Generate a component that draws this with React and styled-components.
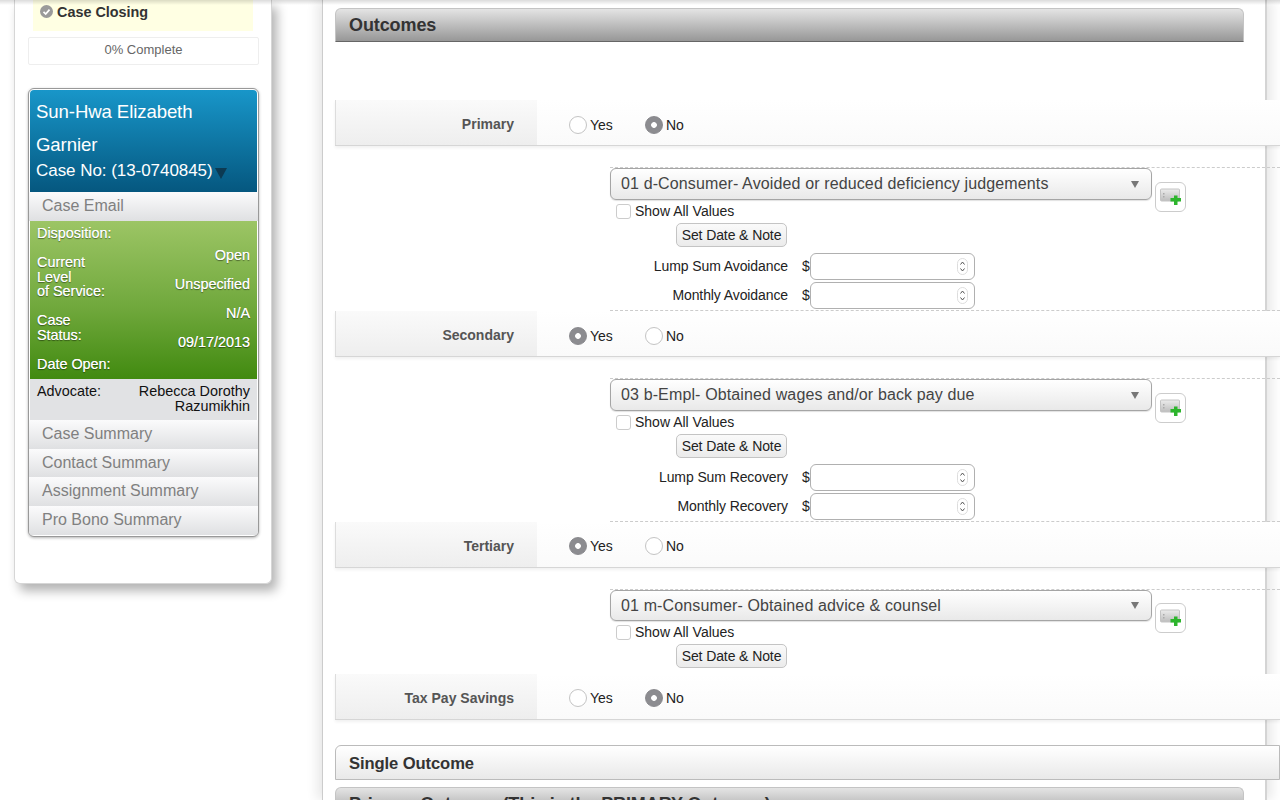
import React from 'react'
import styled, { createGlobalStyle } from 'styled-components'

const Global = createGlobalStyle`
  html, body { margin: 0; padding: 0; background: #fff; overflow: hidden; }
  body { font-family: "Liberation Sans", Arial, sans-serif; }
`

const Page = styled.div`
  position: relative;
  display: flex;
  width: 1280px;
  height: 800px;
  overflow: hidden;
  background: #fff;
  &::after {
    content: '';
    position: absolute;
    left: 0;
    right: 0;
    top: 0;
    height: 5px;
    background: linear-gradient(rgba(0,0,0,.14), rgba(0,0,0,0));
  }
`

const SidePanel = styled.aside`
  flex: none;
  box-sizing: border-box;
  width: 258px;
  height: 584px;
  margin-left: 14px;
  padding: 0 13px 0 13px;
  background: #fff;
  border: 1px solid #d6d6d6;
  border-top: 0;
  border-radius: 0 0 6px 6px;
  box-shadow: 5px 7px 11px rgba(0,0,0,.3);
`

const ClosingBox = styled.div`
  display: flex;
  align-items: center;
  gap: 4px;
  box-sizing: border-box;
  width: 220px;
  height: 31px;
  margin-left: 5px;
  padding: 0 0 8px 7px;
  background: #ffffe3;
  font-size: 14.4px;
  font-weight: bold;
  color: #333;
`

const Progress = styled.div`
  box-sizing: border-box;
  width: 231px;
  height: 28px;
  margin-top: 6px;
  border: 1px solid #eee;
  border-radius: 2px;
  font-size: 13px;
  line-height: 24px;
  text-align: center;
  color: #666;
`

const Card = styled.div`
  box-sizing: border-box;
  width: 231px;
  height: 449px;
  margin-top: 23px;
  border: 1px solid #999;
  border-radius: 6px;
  box-shadow: 0 1px 3px rgba(0,0,0,.3);
  overflow: hidden;
  background: #fff;
`

const CardHead = styled.div`
  box-sizing: border-box;
  height: 102px;
  margin: 1px 1px 0;
  padding-left: 6px;
  border-radius: 4px 4px 0 0;
  background: linear-gradient(#1896c9, #05577f);
  color: #fff;
  font-size: 18.6px;
`

const NameLine = styled.div`
  line-height: 33px;
  padding-top: ${p => p.$first ? '5px' : '0'};
  letter-spacing: -0.1px;
`

const CaseLine = styled.div`
  display: flex;
  align-items: center;
  font-size: 17px;
  line-height: 20px;
  letter-spacing: -0.05px;
`

const CaseCaret = styled.span`
  width: 0;
  height: 0;
  margin: 4px 0 0 2px;
  border-left: 6px solid transparent;
  border-right: 6px solid transparent;
  border-top: 11px solid #0c3a52;
`

const NavItem = styled.div`
  box-sizing: border-box;
  height: ${p => p.$h || 28.7}px;
  padding-left: 13px;
  background: linear-gradient(#fbfbfc, #dfe0e2);
  font-size: 16px;
  line-height: 27px;
  color: #808080;
`

const GreenBox = styled.div`
  box-sizing: border-box;
  height: 158px;
  margin: 0 1px;
  padding: 5px 7px 0;
  display: flex;
  justify-content: space-between;
  background: linear-gradient(#9cc565, #70a83c 55%, #418a10);
  color: #fff;
  font-size: 14.4px;
  line-height: 14.5px;
  text-shadow: 0 1px 1px rgba(0,0,0,.45), 0 0 .6px #fff;
`

const GreenCol = styled.div`
  display: flex;
  flex-direction: column;
  text-align: ${p => p.$right ? 'right' : 'left'};
  padding-top: ${p => p.$right ? '22px' : '0'};
`

const GreenItem = styled.div`
  height: ${p => p.$h}px;
  white-space: pre-line;
`

const AdvocateRow = styled.div`
  box-sizing: border-box;
  height: 41px;
  margin: 0 1px;
  padding: 5px 7px 0;
  display: flex;
  justify-content: space-between;
  background: #e1e2e4;
  color: #111;
  font-size: 14.4px;
  line-height: 14.5px;
`

const AdvocateName = styled.div`
  text-align: right;
  width: 125px;
`

const Main = styled.main`
  flex: none;
  box-sizing: border-box;
  width: 945px;
  height: 800px;
  margin-left: 50px;
  padding: 8px 0 0 12px;
  background: #fff;
  border-left: 1px solid #ccc;
  border-right: 2px solid #d4d4d4;
  box-shadow: -6px 0 10px rgba(0,0,0,.08), 6px 0 10px rgba(0,0,0,.08);
`

const SectionHead = styled.div`
  box-sizing: border-box;
  width: ${p => p.$wide ? 945 : 909}px;
  height: ${p => p.$h}px;
  flex: none;
  padding-left: 13px;
  border: 1px solid ${p => p.$light ? '#bbb' : '#c4c4c4'};
  border-bottom-color: ${p => p.$light ? '#bbb' : '#666'};
  border-radius: 6px ${p => p.$wide ? '0 0' : '6px 0'} 0;
  background: ${p => p.$light
    ? 'linear-gradient(#fff, #e9e9e9)'
    : 'linear-gradient(#e4e4e4, #979797)'};
  color: #333;
  font-size: ${p => p.$light ? 16.6 : 18}px;
  font-weight: bold;
  line-height: ${p => p.$lh}px;
  letter-spacing: -0.1px;
  margin-top: ${p => p.$mt || 0}px;
  overflow: hidden;
`

const Row = styled.div`
  position: relative;
  z-index: 1;
  display: flex;
  width: 945px;
  height: 46px;
  margin-top: ${p => p.$mt || 0}px;
  background: linear-gradient(#fff, #fafafa);
  border-bottom: 1px solid #d6d6d6;
  box-shadow: 0 2px 3px rgba(0,0,0,.06);
  box-sizing: border-box;
`

const RowLabel = styled.div`
  flex: none;
  box-sizing: border-box;
  width: 202px;
  padding: 4px 23px 0 0;
  border-left: 1px solid #ddd;
  background: linear-gradient(#fafafa, #eee);
  text-align: right;
  font-size: 14px;
  font-weight: bold;
  line-height: 40px;
  color: #555;
`

const Radios = styled.div`
  display: flex;
  align-items: center;
  padding: ${p => p.$tight ? 2 : 4}px 0 0 32px;
  font-size: 14px;
  color: #222;
`

const RadioItem = styled.label`
  display: flex;
  align-items: center;
  gap: 3px;
  width: 76px;
`

const RadioDot = styled.span`
  box-sizing: border-box;
  width: 18px;
  height: 18px;
  border-radius: 50%;
  border: 1px solid ${p => p.$on ? '#88888c' : '#c4c4c4'};
  background: ${p => p.$on
    ? 'radial-gradient(circle, #fff 0 2.5px, #8c8c90 3.2px)'
    : '#fff'};
`

const Section = styled.div`
  box-sizing: border-box;
  width: 670px;
  height: ${p => p.$h}px;
  margin: 21px 0 0 275px;
  border-top: 1px dashed #ccc;
  border-bottom: ${p => p.$closed ? '1px dashed #ccc' : '0'};
  font-size: 14px;
  color: #222;
`

const SelectRow = styled.div`
  display: flex;
  align-items: flex-start;
  margin-bottom: -9px;
`

const FakeSelect = styled.div`
  box-sizing: border-box;
  display: flex;
  justify-content: space-between;
  align-items: center;
  width: 542px;
  height: ${p => p.$short ? 31 : 32}px;
  padding: 0 12px 0 10px;
  border: 1px solid #a5a5a5;
  border-radius: 6px;
  background: linear-gradient(#fff, #e9e9e9);
  box-shadow: 0 1px 1px rgba(0,0,0,.12);
  font-size: 16px;
  letter-spacing: .13px;
  color: #444;
`

const Caret = styled.span`
  width: 0;
  height: 0;
  border-left: 4px solid transparent;
  border-right: 4px solid transparent;
  border-top: 7px solid #777;
`

const AddButton = styled.button`
  box-sizing: border-box;
  display: flex;
  align-items: center;
  justify-content: center;
  width: 31px;
  height: 30px;
  margin: ${p => p.$top}px 0 0 3px;
  padding: 0;
  background: #fff;
  border: 1px solid #ccc;
  border-radius: 6px;
`

const CheckRow = styled.label`
  display: flex;
  align-items: center;
  gap: 4px;
  height: 16px;
  margin-left: 6px;
`

const CheckBox = styled.span`
  box-sizing: border-box;
  width: 15px;
  height: 15px;
  border: 1px solid #ccc;
  border-radius: 3px;
  background: #fff;
`

const SetDate = styled.button`
  display: block;
  box-sizing: border-box;
  width: 111px;
  height: 24px;
  margin: 4px 0 0 66px;
  padding: 0;
  border: 1px solid #c4c4c4;
  border-radius: 5px;
  background: linear-gradient(#fafafa, #ebebeb);
  font: 14px "Liberation Sans", Arial, sans-serif;
  letter-spacing: -0.1px;
  color: #222;
`

const AmountRow = styled.div`
  display: flex;
  align-items: center;
  height: 28px;
  margin-top: ${p => p.$mt || 0}px;
`

const AmountLabel = styled.div`
  width: 178px;
  text-align: right;
  letter-spacing: -0.1px;
`

const Dollar = styled.div`
  width: 8px;
  margin-left: 14px;
`

const NumberBox = styled.div`
  box-sizing: border-box;
  display: flex;
  align-items: center;
  justify-content: flex-end;
  width: 165px;
  height: 27px;
  padding-right: 6px;
  border: 1px solid #b0b0b0;
  border-radius: 6px;
  background: #fff;
`

const Spinner = styled.svg`
  width: 11px;
  height: 17px;
`

const PlusIcon = () => (
  <svg width="22" height="18" viewBox="0 0 22 18">
    <defs>
      <linearGradient id="cardGrad" x1="0" y1="0" x2="0" y2="1">
        <stop offset="0" stopColor="#ececec" />
        <stop offset="1" stopColor="#bdbdbd" />
      </linearGradient>
    </defs>
    <rect x="0.5" y="1" width="19" height="12" rx="1" fill="url(#cardGrad)" stroke="#c4c4c4" />
    <rect x="3" y="5" width="1.5" height="1.5" fill="#aaa" />
    <rect x="3" y="8" width="1.5" height="1.5" fill="#aaa" />
    <path d="M14 7.5h3.5V10H21v3.5h-3.5V17H14v-3.5h-3.5V10H14z" fill="#2db52d" />
  </svg>
)

const CheckIcon = () => (
  <svg width="13" height="13" viewBox="0 0 13 13">
    <circle cx="6.5" cy="6.5" r="6.5" fill="#9a9a9a" />
    <path d="M3.5 6.8l2.2 2.2 3.8-4.4" fill="none" stroke="#fff" strokeWidth="1.7" />
  </svg>
)

const Radio = ({ label, on }) => (
  <RadioItem>
    <RadioDot $on={on} />
    {label}
  </RadioItem>
)

const QuestionRow = ({ label, yes, mt, tight }) => (
  <Row $mt={mt}>
    <RowLabel>{label}</RowLabel>
    <Radios $tight={tight}>
      <Radio label="Yes" on={yes} />
      <Radio label="No" on={!yes} />
    </Radios>
  </Row>
)

const Amount = ({ label, mt }) => (
  <AmountRow $mt={mt}>
    <AmountLabel>{label}</AmountLabel>
    <Dollar>$</Dollar>
    <NumberBox>
      <Spinner viewBox="0 0 11 17">
        <rect x="0.5" y="0.5" width="10" height="16" rx="5" fill="#fff" stroke="#ddd" />
        <path d="M3.5 6.5l2-2.5 2 2.5M3.5 10.5l2 2.5 2-2.5" fill="none" stroke="#555" />
      </Spinner>
    </NumberBox>
  </AmountRow>
)

const OutcomeSection = ({ value, amounts, h, short, addTop = 13 }) => (
  <Section $h={h} $closed={!!amounts}>
    <SelectRow>
      <FakeSelect $short={short}>{value}<Caret /></FakeSelect>
      <AddButton $top={addTop}><PlusIcon /></AddButton>
    </SelectRow>
    <CheckRow><CheckBox />Show All Values</CheckRow>
    <SetDate>Set Date &amp; Note</SetDate>
    {amounts && amounts.map((a, i) => <Amount key={a} label={a} mt={i ? 1 : 5} />)}
  </Section>
)

export default function App() {
  return (
    <Page>
      <Global />
      <SidePanel>
        <ClosingBox><CheckIcon />Case Closing</ClosingBox>
        <Progress>0% Complete</Progress>
        <Card>
          <CardHead>
            <NameLine $first>Sun-Hwa Elizabeth</NameLine>
            <NameLine>Garnier</NameLine>
            <CaseLine>Case No: (13-0740845)<CaseCaret /></CaseLine>
          </CardHead>
          <NavItem $h={29}>Case Email</NavItem>
          <GreenBox>
            <GreenCol>
              <GreenItem $h={29}>Disposition:</GreenItem>
              <GreenItem $h={58}>{'Current\nLevel\nof Service:'}</GreenItem>
              <GreenItem $h={44}>{'Case\nStatus:'}</GreenItem>
              <GreenItem $h={15}>Date Open:</GreenItem>
            </GreenCol>
            <GreenCol $right>
              <GreenItem $h={29}>Open</GreenItem>
              <GreenItem $h={29}>Unspecified</GreenItem>
              <GreenItem $h={29}>N/A</GreenItem>
              <GreenItem $h={15}>09/17/2013</GreenItem>
            </GreenCol>
          </GreenBox>
          <AdvocateRow>
            <div>Advocate:</div>
            <AdvocateName>Rebecca Dorothy Razumikhin</AdvocateName>
          </AdvocateRow>
          <NavItem>Case Summary</NavItem>
          <NavItem>Contact Summary</NavItem>
          <NavItem>Assignment Summary</NavItem>
          <NavItem>Pro Bono Summary</NavItem>
        </Card>
      </SidePanel>
      <Main>
        <SectionHead $h={34} $lh={33}>Outcomes</SectionHead>
        <QuestionRow label="Primary" mt={58} />
        <OutcomeSection
          h={144}
          addTop={14}
          value="01 d-Consumer- Avoided or reduced deficiency judgements"
          amounts={['Lump Sum Avoidance', 'Monthly Avoidance']}
        />
        <QuestionRow label="Secondary" yes />
        <OutcomeSection
          h={144}
          addTop={14}
          value="03 b-Empl- Obtained wages and/or back pay due"
          amounts={['Lump Sum Recovery', 'Monthly Recovery']}
        />
        <QuestionRow label="Tertiary" yes tight />
        <OutcomeSection
          h={85}
          short
          value="01 m-Consumer- Obtained advice & counsel"
        />
        <QuestionRow label="Tax Pay Savings" tight />
        <SectionHead $light $wide $h={35} $lh={35} $mt={25}>Single Outcome</SectionHead>
        <SectionHead $h={34} $lh={33} $mt={7}>Primary Outcome (This is the PRIMARY Outcome)</SectionHead>
      </Main>
    </Page>
  )
}
